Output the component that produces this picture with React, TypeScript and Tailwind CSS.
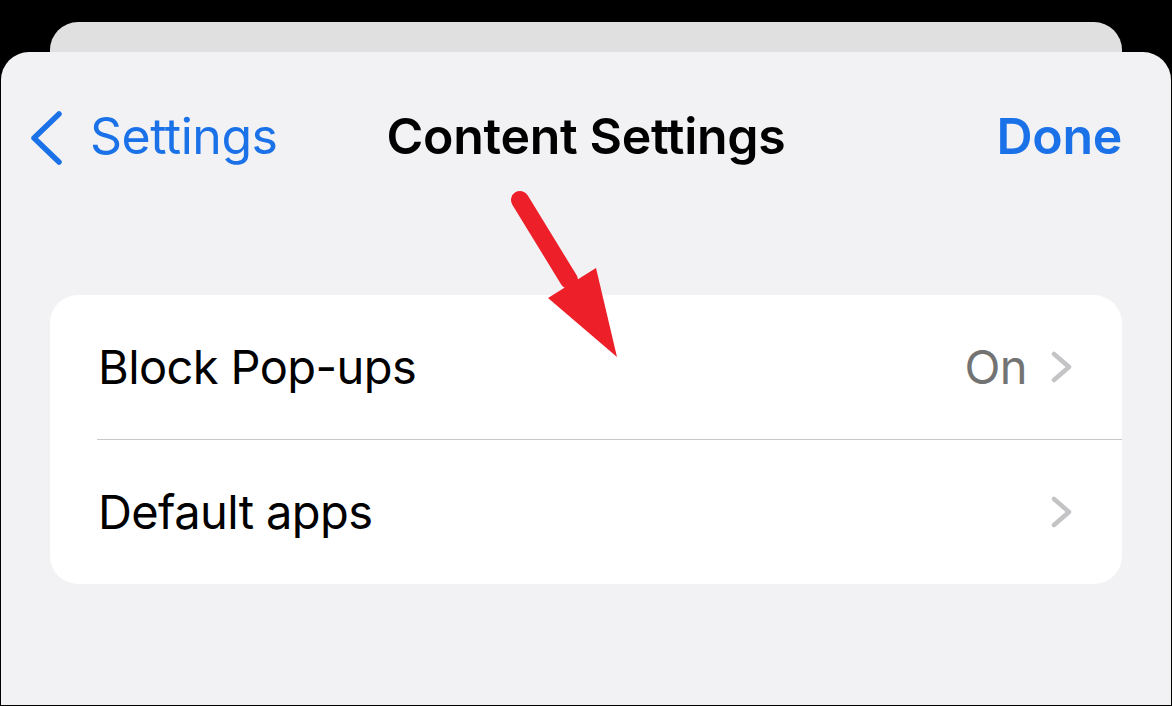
import React from "react";

const Chevron = ({ className }: { className?: string }) => (
  <svg viewBox="0 0 22 32" className={className} fill="none">
    <path d="M3 3 L18 16 L3 29" stroke="currentColor" strokeWidth="4.5" strokeLinecap="round" strokeLinejoin="round" />
  </svg>
);

const Row = ({ label, value }: { label: string; value?: string }) => (
  <div className="flex h-[144px] items-center pl-[48px] pr-[49px]">
    <span className="flex-1 text-[47px] tracking-[-0.6px] text-black">{label}</span>
    {value && <span className="mr-[24px] text-[47px] tracking-[-0.6px] text-[#737373]">{value}</span>}
    <Chevron className="h-[32px] w-[22px] text-[#c4c4c7]" />
  </div>
);

export default function App() {
  return (
    <div
      className="relative flex h-[706px] w-[1172px] flex-col overflow-hidden bg-black px-px pb-px pt-[22px]"
      style={{ fontFamily: "Inter, 'Noto Sans', sans-serif" }}
    >
      {/* sheet behind */}
      <div className="mx-[49px] h-[30px] shrink-0 rounded-t-[28px] bg-[#e0e0e0]" />

      {/* front sheet */}
      <div className="flex flex-1 flex-col rounded-t-[28px] bg-[#f2f2f4]">
        {/* nav bar */}
        <div className="mt-[47px] grid h-[60px] grid-cols-[1fr_auto_1fr] items-center">
          <div className="flex items-center pl-[28px] text-[#1b72e8]">
            <svg viewBox="0 0 34 56" className="mt-[2px] h-[56px] w-[34px]" fill="none">
              <path d="M30 4 L5 28 L30 52" stroke="currentColor" strokeWidth="5.5" strokeLinecap="round" strokeLinejoin="round" />
            </svg>
            <span className="ml-[27px] text-[50px] tracking-[-0.5px]">Settings</span>
          </div>
          <div className="text-[50px] font-semibold tracking-[-0.3px] text-black">Content Settings</div>
          <div className="flex justify-end pr-[49px]">
            <span className="text-[50px] font-semibold tracking-[-0.3px] text-[#1b72e8]">Done</span>
          </div>
        </div>

        {/* settings card */}
        <div className="mx-[49px] mt-[136px] rounded-[28px] bg-white">
          <Row label="Block Pop-ups" value="On" />
          <div className="ml-[47px] h-px bg-[#c8c8cc]" />
          <Row label="Default apps" />
        </div>
      </div>

      {/* red annotation arrow */}
      <svg className="absolute left-[505px] top-[185px] h-[180px] w-[125px]" viewBox="0 0 125 180" fill="none">
        <line x1="15" y1="15" x2="64" y2="95" stroke="#ed1f28" strokeWidth="18" strokeLinecap="round" />
        <polygon points="43,113 91,83 112,172" fill="#ed1f28" />
      </svg>
    </div>
  );
}
